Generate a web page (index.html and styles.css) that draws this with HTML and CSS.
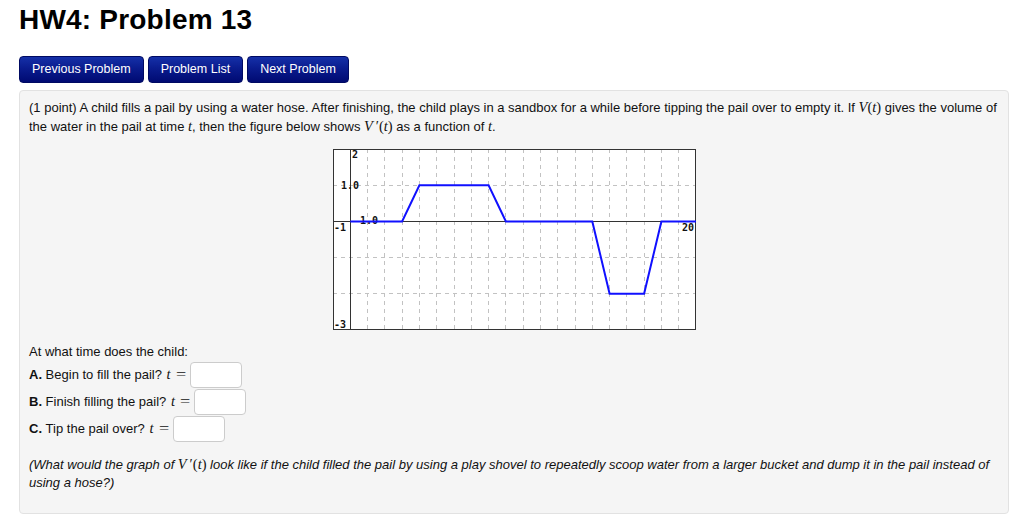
FILE: index.html
```html
<!DOCTYPE html>
<html>
<head>
<meta charset="utf-8">
<link rel="stylesheet" href="styles.css">
</head>
<body>
<div class="page">
  <h1 class="title">HW4: Problem 13</h1>
  <div class="nav">
    <button class="btn">Previous Problem</button>
    <button class="btn">Problem List</button>
    <button class="btn">Next Problem</button>
  </div>
  <div class="problem">
    <p class="intro">(1 point) A child fills a pail by using a water hose. After finishing, the child plays in a sandbox for a while before tipping the pail over to empty it. If <span class="math"><i>V</i>(<i>t</i>)</span> gives the volume of<br>the water in the pail at time <span class="math"><i>t</i></span>, then the figure below shows <span class="math"><i>V</i>&thinsp;′(<i>t</i>)</span> as a function of <span class="math"><i>t</i></span>.</p>
    <div class="figure">
      <svg class="graph" width="363" height="181" viewBox="0 0 363 181" xmlns="http://www.w3.org/2000/svg">
        <rect x="0" y="0" width="363" height="181" fill="#ffffff"/>
        <g stroke="#c2c2c2" stroke-width="1" stroke-dasharray="4,4" fill="none">
          <path d="M34.5 0V181 M51.5 0V181 M69.5 0V181 M86.5 0V181 M103.5 0V181 M121.5 0V181 M138.5 0V181 M155.5 0V181 M172.5 0V181 M190.5 0V181 M207.5 0V181 M224.5 0V181 M242.5 0V181 M259.5 0V181 M276.5 0V181 M293.5 0V181 M311.5 0V181 M328.5 0V181 M345.5 0V181"/>
          <path d="M0 36.5H363 M0 108.5H363 M0 144.5H363"/>
        </g>
        <g stroke="#333333" stroke-width="1" fill="none">
          <path d="M17.5 0V181 M0 72.5H363"/>
          <rect x="0.5" y="0.5" width="362" height="180"/>
        </g>
        <g class="lbl">
          <text x="19" y="9">2</text>
          <text x="8" y="40">1.0</text>
          <text x="27" y="75">1.0</text>
          <text x="1" y="82">-1</text>
          <text x="349" y="82">20</text>
          <text x="1" y="179">-3</text>
        </g>
        <polyline fill="none" stroke="#1010ff" stroke-width="2" stroke-linejoin="miter" points="17.3,72.4 69.1,72.4 86.4,36.2 155.6,36.2 172.9,72.4 259.3,72.4 276.6,144.8 311.1,144.8 328.4,72.4 363,72.4"/>
      </svg>
    </div>
    <p class="q">At what time does the child:</p>
    <div class="row"><b>A.</b>&nbsp;Begin to fill the pail? <span class="math eq"><i>t</i><span class="op">=</span></span><input class="ans" type="text"></div>
    <div class="row"><b>B.</b>&nbsp;Finish filling the pail? <span class="math eq"><i>t</i><span class="op">=</span></span><input class="ans" type="text"></div>
    <div class="row"><b>C.</b>&nbsp;Tip the pail over? <span class="math eq"><i>t</i><span class="op">=</span></span><input class="ans" type="text"></div>
    <p class="note">(What would the graph of <span class="math"><i>V</i>&thinsp;′(<i>t</i>)</span> look like if the child filled the pail by using a play shovel to repeatedly scoop water from a larger bucket and dump it in the pail instead of<br>using a hose?)</p>
  </div>
</div>
</body>
</html>
```
FILE: styles.css
```css
html, body {
  margin: 0;
  padding: 0;
  background: #ffffff;
}

body {
  font-family: "Liberation Sans", Arial, Helvetica, sans-serif;
  font-size: 13px;
  color: #111111;
}

.page {
  padding: 0 15px 0 19px;
}

.title {
  margin: 0;
  padding-top: 4px;
  font-size: 28px;
  line-height: 32px;
  letter-spacing: 0.2px;
  font-weight: bold;
  color: #000000;
}

.nav {
  display: flex;
  gap: 4px;
  margin-top: 20px;
}

.btn {
  height: 27px;
  padding: 0 12px;
  border: 1px solid #000a62;
  border-radius: 4px;
  background: linear-gradient(to bottom, #1530a8 0%, #0a1c8e 45%, #000a72 100%);
  color: #ffffff;
  font-family: "Liberation Sans", Arial, Helvetica, sans-serif;
  font-size: 12.5px;
  line-height: 25px;
  cursor: pointer;
}

.problem {
  margin-top: 7px;
  background: #f5f5f5;
  border: 1px solid #e2e2e2;
  border-radius: 4px;
  padding: 7px 9px 21px;
}

.intro {
  margin: 0;
  line-height: 19px;
  white-space: nowrap;
}

.math {
  font-family: "Liberation Serif", "DejaVu Serif", serif;
  font-size: 14.5px;
  font-style: normal;
}

.math i {
  font-style: italic;
}

.figure {
  display: flex;
  justify-content: center;
  margin-top: 13px;
}

.graph {
  display: block;
}

.lbl text {
  font-family: "DejaVu Sans Mono", "Liberation Mono", monospace;
  font-weight: bold;
  font-size: 10px;
  fill: #111111;
}

.q {
  margin: 12px 0 0;
  line-height: 19px;
}

.row {
  display: flex;
  align-items: center;
  height: 27px;
  white-space: pre;
}

.eq {
  display: inline-flex;
  align-items: baseline;
  margin-left: 1px;
}

.op {
  display: inline-block;
  margin-left: 6px;
  transform: scaleX(1.25);
}

.ans {
  box-sizing: border-box;
  width: 52px;
  height: 26px;
  margin-left: 5px;
  border: 1px solid #cccccc;
  border-radius: 4px;
  background: #ffffff;
  padding: 0 4px;
}

.note {
  margin: 13px 0 0;
  line-height: 18px;
  font-style: italic;
  white-space: nowrap;
}

.note .math {
  font-style: normal;
}
```
